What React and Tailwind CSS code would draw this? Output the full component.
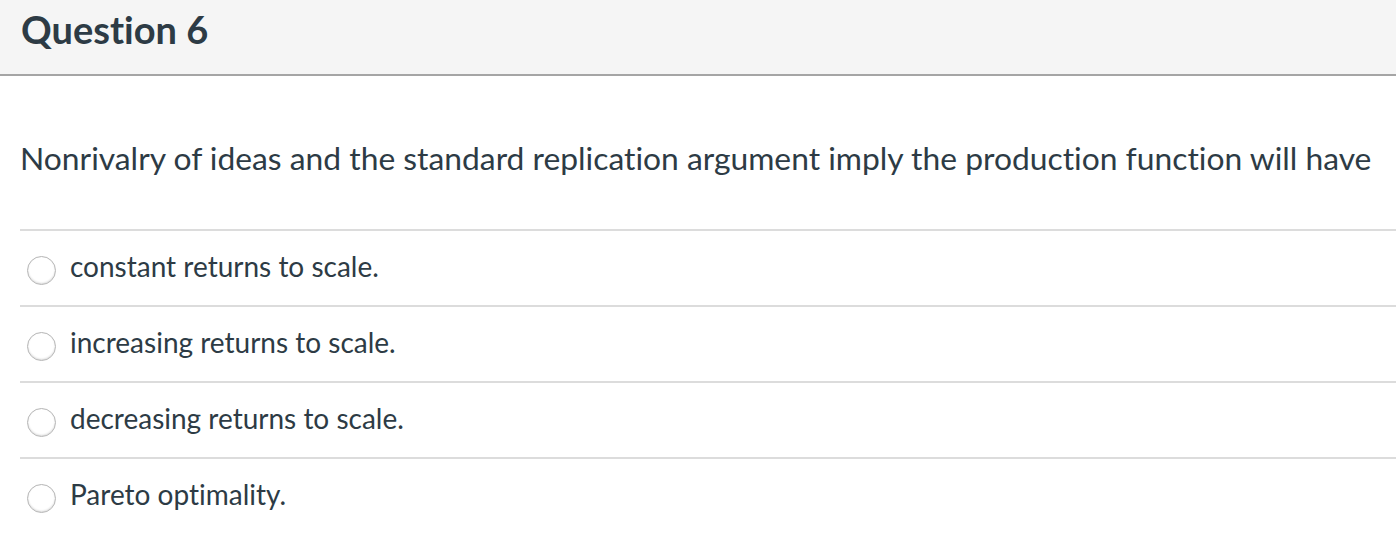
export default function App() {
  const answers = [
    "constant returns to scale.",
    "increasing returns to scale.",
    "decreasing returns to scale.",
    "Pareto optimality.",
  ];
  return (
    <div className="w-[1396px] h-[538px] bg-white text-[#2d3b45] overflow-hidden [font-variant-ligatures:none]" style={{ fontFamily: "Lato, 'Open Sans', sans-serif" }}>
      <div className="h-[76px] bg-[#f5f5f5] border-b-2 border-[#a5a5a5] flex items-center px-[21px]">
        <h2 className="text-[38px] font-bold leading-none pb-[16px]">Question 6</h2>
      </div>
      <div className="pl-[20px]">
        <div className="pt-[63px] pb-[52px] text-[31.8px] leading-[38px] whitespace-nowrap">
          Nonrivalry of ideas and the standard replication argument imply the production function will have
        </div>
        {answers.map((a) => (
          <div key={a} className="border-t-2 border-[#dcdcdc] h-[76px] flex items-center">
            <span className="ml-[7px] mt-[4px] w-[29px] h-[29px] rounded-full border border-[#b5b5b5] bg-white shadow-[inset_0_-1px_2px_rgba(0,0,0,0.15)] shrink-0" />
            <span className="ml-[14px] text-[28px] leading-none pb-[4px]">{a}</span>
          </div>
        ))}
      </div>
    </div>
  );
}
